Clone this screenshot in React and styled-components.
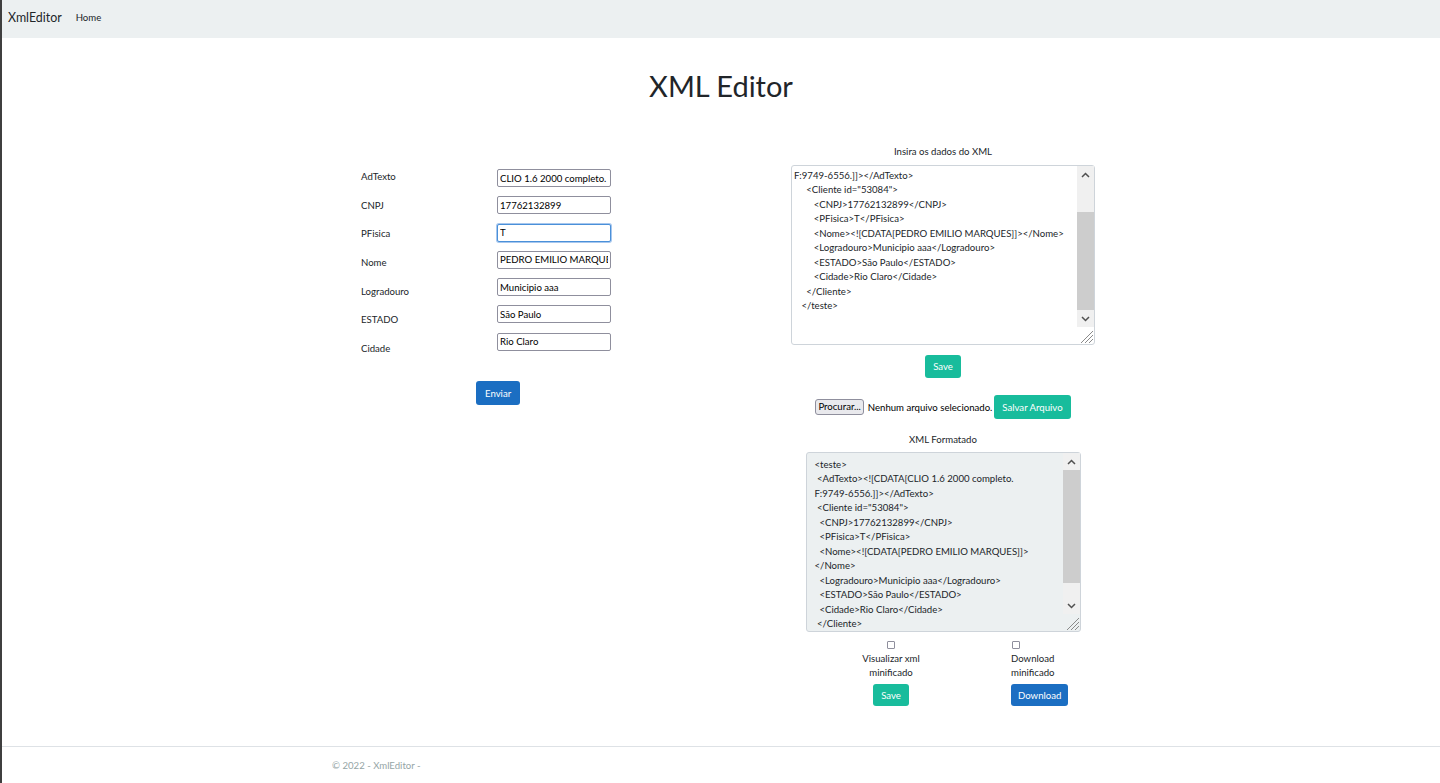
import React, { useEffect, useRef } from 'react';
import styled, { createGlobalStyle } from 'styled-components';

const GlobalStyle = createGlobalStyle`
    html, body {
        margin: 0;
        padding: 0;
    }
    body {
        font-family: Lato, "Open Sans", "Liberation Sans", sans-serif;
        color: #212529;
        background: #fff;
        border-left: 2px solid #3f3f3f;
    }
`

const Page = styled.div`
    height: 783px;
    display: flex;
    flex-direction: column;
    overflow: hidden;
`

const NavBar = styled.nav`
    height: 38px;
    background: #ecf0f1;
    display: flex;
    align-items: center;
    padding-left: 6px;
    flex-shrink: 0;
`

const Brand = styled.a`
    font-size: 12.4px;
    color: #212529;
    margin-right: 14px;
    margin-top: -3px;
`

const NavLink = styled.a`
    font-size: 9.6px;
    color: #212529;
    margin-top: -3px;
`

const Title = styled.h1`
    margin: 30px 0 0;
    font-size: 29px;
    font-weight: 400;
    line-height: 36px;
    text-align: center;
    color: #212529;
`

const Container = styled.div`
    width: 778px;
    margin: 0 auto;
    box-sizing: border-box;
`

const Row = styled.div`
    display: grid;
    grid-template-columns: 446px 330px;
    margin-top: 41px;
`

const LeftCol = styled.div`
    padding-top: 24px;
`

const FormGrid = styled.div`
    display: flex;
    padding-left: 29px;
`

const LabelColumn = styled.div`
    width: 136px;
    display: flex;
    flex-direction: column;
    padding-top: 1px;
`

const Label = styled.label`
    font-size: 9.6px;
    height: 28.67px;
    line-height: 14px;
`

const InputColumn = styled.div`
    display: flex;
    flex-direction: column;
    gap: 9.3px;
`

const TextInput = styled.input`
    width: 114px;
    height: 18px;
    box-sizing: border-box;
    font-family: Lato, "Open Sans", sans-serif;
    font-size: 9.6px;
    padding: 0 2px;
    border: 1px solid ${p => (p.$focused ? '#4a90d9' : '#8f8f9d')};
    border-radius: 2px;
    box-shadow: ${p => (p.$focused ? '0 0 0 1px #a7c7ee' : 'none')};
    color: #000;
    outline: none;
    overflow: hidden;
`

const SubmitWrap = styled.div`
    padding-left: 144px;
    margin-top: 10px;
`

const Button = styled.button`
    font-family: Lato, "Open Sans", sans-serif;
    font-size: 9.6px;
    color: #fff;
    border: none;
    border-radius: 3px;
    background: ${p => (p.$variant === 'primary' ? '#1b6ec2' : '#18bc9c')};
    height: ${p => p.$h || 23}px;
    padding: 0 ${p => p.$px || 9}px;
    cursor: pointer;
`

const RightCol = styled.div`
    display: flex;
    flex-direction: column;
    align-items: center;
`

const Caption = styled.div`
    font-size: 9.6px;
    line-height: 14px;
    text-align: center;
`

const AreaWrap = styled.div`
    position: relative;
    width: ${p => p.$w}px;
    height: 180px;
    margin-top: ${p => p.$mt}px;
`

const XmlArea = styled.textarea`
    display: block;
    box-sizing: border-box;
    width: 100%;
    height: 100%;
    margin: 0;
    font-family: Lato, "Open Sans", sans-serif;
    font-size: 9.6px;
    line-height: 14.45px;
    padding: 5px 19px 5px ${p => p.$pl}px;
    color: #212529;
    background: ${p => (p.$readonly ? '#ecf0f1' : '#fff')};
    border: 1px solid #ced4da;
    border-radius: 3px;
    resize: none;
    outline: none;
    overflow: hidden;
    white-space: pre-wrap;
`

const ScrollBar = styled.div`
    position: absolute;
    top: 1px;
    right: 1px;
    width: 17px;
    height: 161px;
    display: flex;
    flex-direction: column;
    background: #f0f0f0;
`

const ArrowBox = styled.div`
    height: 17px;
    display: flex;
    align-items: center;
    justify-content: center;
    flex-shrink: 0;
`

const Track = styled.div`
    flex: 1;
    display: flex;
    flex-direction: column;
`

const Thumb = styled.div`
    background: #cdcdcd;
    margin-top: ${p => p.$top}px;
    height: ${p => p.$h}px;
`

const Grip = styled.div`
    position: absolute;
    right: 1px;
    bottom: 1px;
    width: 17px;
    height: 17px;
    display: flex;
`

const Chevron = ({ up }) => (
    <svg width="9" height="6" viewBox="0 0 9 6">
        <path
            d={up ? 'M1 5 L4.5 1.5 L8 5' : 'M1 1 L4.5 4.5 L8 1'}
            fill="none"
            stroke="#505050"
            strokeWidth="1.5"
        />
    </svg>
)

const GripIcon = () => (
    <svg width="17" height="17" viewBox="0 0 17 17">
        <g stroke="#8a8a8a" strokeWidth="1">
            <line x1="16" y1="4" x2="4" y2="16" />
            <line x1="16" y1="8" x2="8" y2="16" />
            <line x1="16" y1="12" x2="12" y2="16" />
        </g>
    </svg>
)

const FakeScroll = ({ top, h }) => (
    <>
        <ScrollBar>
            <ArrowBox><Chevron up /></ArrowBox>
            <Track><Thumb $top={top} $h={h} /></Track>
            <ArrowBox><Chevron /></ArrowBox>
        </ScrollBar>
        <Grip><GripIcon /></Grip>
    </>
)

const FileRow = styled.div`
    display: flex;
    align-items: center;
    margin-top: 17px;
`

const FileButton = styled.span`
    font-size: 9.6px;
    line-height: 14px;
    background: #e9e9ed;
    border: 1px solid #8f8f9d;
    border-radius: 3px;
    padding: 0 2px;
    color: #000;
`

const FileText = styled.span`
    font-size: 9.6px;
    margin: 0 2px 0 4px;
    color: #000;
`

const OptionsRow = styled.div`
    align-self: stretch;
    display: flex;
    margin-top: 9px;
    padding-left: 78px;
    gap: 85px;
`

const Option = styled.div`
    width: ${p => p.$w}px;
    display: flex;
    flex-direction: column;
    align-items: ${p => (p.$left ? 'flex-start' : 'center')};
`

const Check = styled.span`
    width: 6px;
    height: 6px;
    border: 1px solid #8f8f9d;
    border-radius: 1px;
    background: #fff;
    margin-left: ${p => (p.$left ? '1px' : '0')};
`

const OptionLabel = styled.div`
    font-size: 9.6px;
    line-height: 14px;
    margin-top: 3px;
    text-align: ${p => (p.$left ? 'left' : 'center')};
`

const Footer = styled.footer`
    margin-top: auto;
    height: 36px;
    border-top: 1px solid #dee2e6;
    flex-shrink: 0;
`

const FooterText = styled.div`
    font-size: 9.6px;
    color: #95a5a6;
    line-height: 14px;
    padding-top: 12px;
`

const fields = [
    ['AdTexto', 'CLIO 1.6 2000 completo.'],
    ['CNPJ', '17762132899'],
    ['PFisica', 'T'],
    ['Nome', 'PEDRO EMILIO MARQUES'],
    ['Logradouro', 'Municipio aaa'],
    ['ESTADO', 'São Paulo'],
    ['Cidade', 'Rio Claro'],
]

const xmlInput = `<teste>
   <AdTexto><![CDATA[CLIO 1.6 2000 completo.
F:9749-6556.]]></AdTexto>
     <Cliente id="53084">
        <CNPJ>17762132899</CNPJ>
        <PFisica>T</PFisica>
        <Nome><![CDATA[PEDRO EMILIO MARQUES]]></Nome>
        <Logradouro>Municipio aaa</Logradouro>
        <ESTADO>São Paulo</ESTADO>
        <Cidade>Rio Claro</Cidade>
     </Cliente>
   </teste>



`

const xmlFormatted = `<teste>
 <AdTexto><![CDATA[CLIO 1.6 2000 completo.
F:9749-6556.]]></AdTexto>
 <Cliente id="53084">
  <CNPJ>17762132899</CNPJ>
  <PFisica>T</PFisica>
  <Nome><![CDATA[PEDRO EMILIO MARQUES]]>
</Nome>
  <Logradouro>Municipio aaa</Logradouro>
  <ESTADO>São Paulo</ESTADO>
  <Cidade>Rio Claro</Cidade>
 </Cliente>
</teste>`

const App = () => {
    const inputArea = useRef(null)

    useEffect(() => {
        if (inputArea.current) inputArea.current.scrollTop = 31
    }, [])

    return (
        <Page>
            <GlobalStyle />
            <NavBar>
                <Brand>XmlEditor</Brand>
                <NavLink>Home</NavLink>
            </NavBar>
            <Title>XML Editor</Title>
            <Container>
                <Row>
                    <LeftCol>
                        <FormGrid>
                            <LabelColumn>
                                {fields.map(([name]) => <Label key={name}>{name}</Label>)}
                            </LabelColumn>
                            <InputColumn>
                                {fields.map(([name, value]) => (
                                    <TextInput
                                        key={name}
                                        defaultValue={value}
                                        $focused={name === 'PFisica'}
                                    />
                                ))}
                            </InputColumn>
                        </FormGrid>
                        <SubmitWrap>
                            <Button $variant="primary" $h={24} $px={9}>Enviar</Button>
                        </SubmitWrap>
                    </LeftCol>
                    <RightCol>
                        <Caption>Insira os dados do XML</Caption>
                        <AreaWrap $w={304} $mt={6}>
                            <XmlArea ref={inputArea} $pl={2} defaultValue={xmlInput} />
                            <FakeScroll top={29} h={98} />
                        </AreaWrap>
                        <Button style={{ marginTop: 10 }} $px={8}>Save</Button>
                        <FileRow>
                            <FileButton>Procurar...</FileButton>
                            <FileText>Nenhum arquivo selecionado.</FileText>
                            <Button $h={24} $px={8}>Salvar Arquivo</Button>
                        </FileRow>
                        <Caption style={{ marginTop: 14 }}>XML Formatado</Caption>
                        <AreaWrap $w={275} $mt={5}>
                            <XmlArea $pl={8} $readonly readOnly defaultValue={xmlFormatted} />
                            <FakeScroll top={0} h={113} />
                        </AreaWrap>
                        <OptionsRow>
                            <Option $w={70}>
                                <Check />
                                <OptionLabel>Visualizar xml<br />minificado</OptionLabel>
                                <Button style={{ marginTop: 4 }} $h={22} $px={8}>Save</Button>
                            </Option>
                            <Option $w={70} $left>
                                <Check $left />
                                <OptionLabel $left>Download<br />minificado</OptionLabel>
                                <Button style={{ marginTop: 4 }} $variant="primary" $h={22} $px={7}>Download</Button>
                            </Option>
                        </OptionsRow>
                    </RightCol>
                </Row>
            </Container>
            <Footer>
                <Container>
                    <FooterText>© 2022 - XmlEditor -</FooterText>
                </Container>
            </Footer>
        </Page>
    )
}

export default App
